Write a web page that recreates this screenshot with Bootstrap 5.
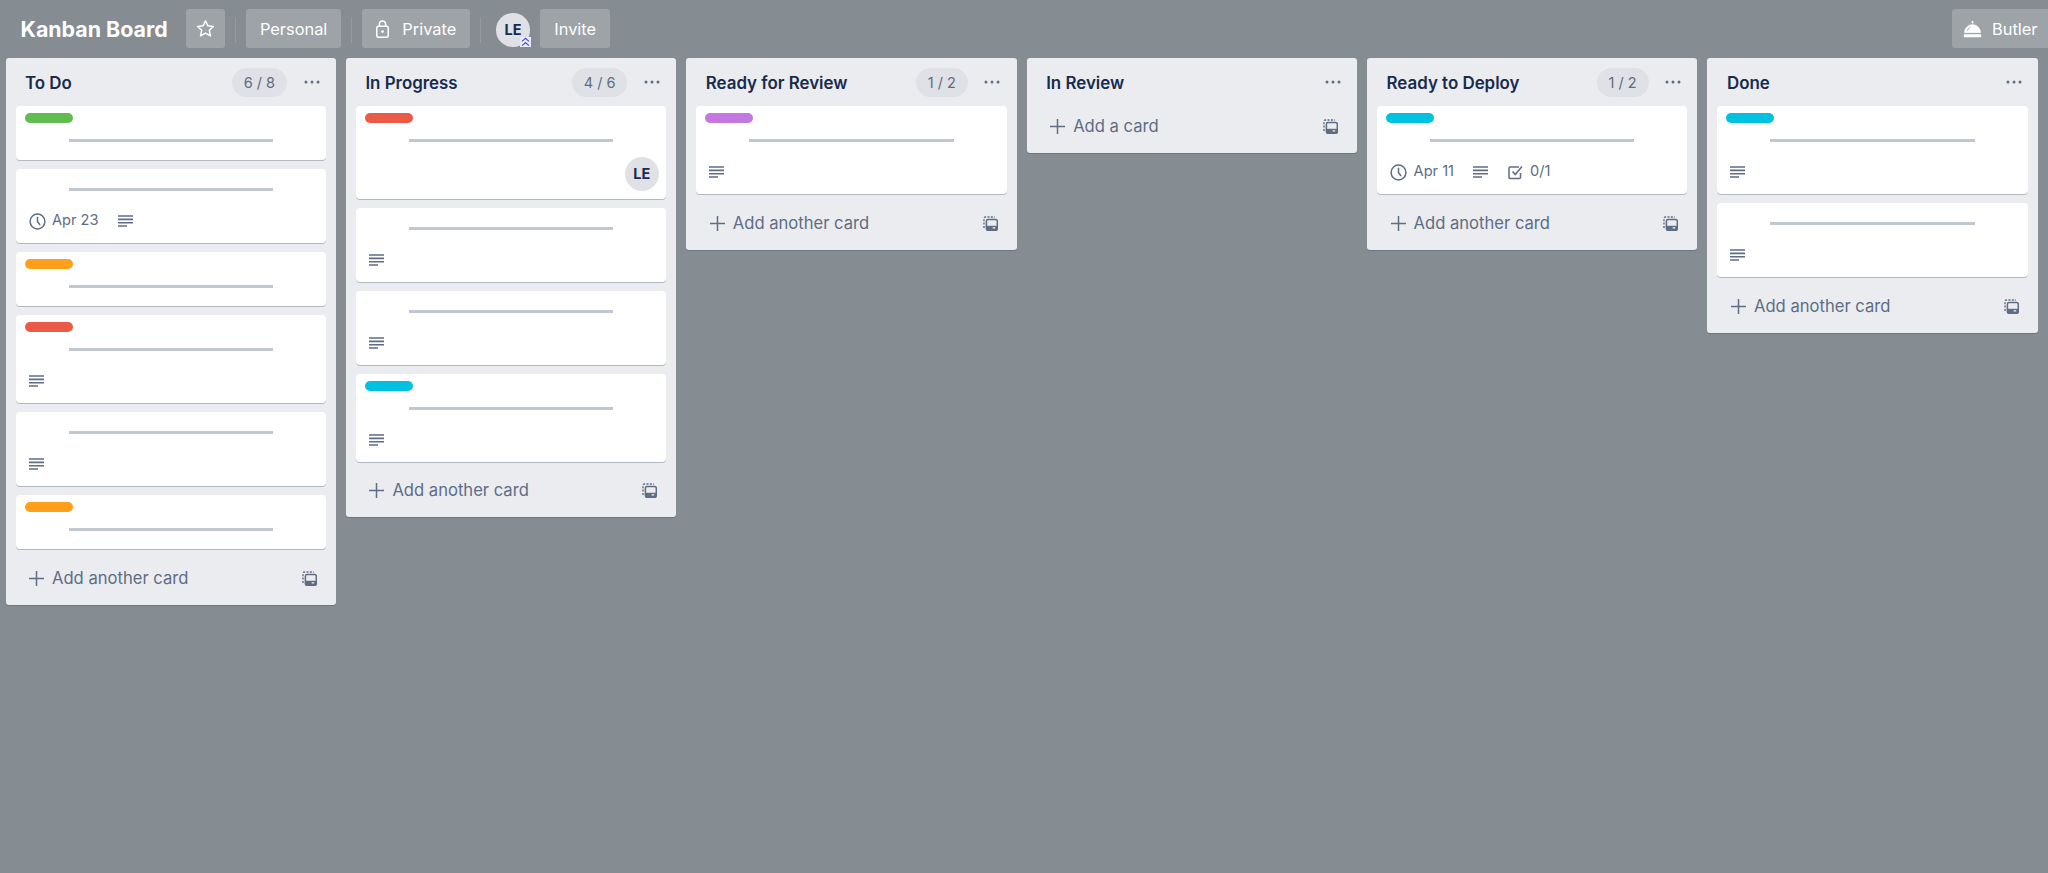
<!DOCTYPE html>
<html lang="en">
<head>
<meta charset="utf-8">
<title>Kanban Board</title>
<link href="https://cdn.jsdelivr.net/npm/bootstrap@5.3.0/dist/css/bootstrap.min.css" rel="stylesheet">
<style>
html,body{height:100%}
body{background:#858c92;font-family:Inter,"Liberation Sans",sans-serif;color:#172b4d;overflow:hidden}
.topbar{height:57.5px;padding:9px 0 0 20.5px;gap:0}
.board-title{font-size:21.4px;font-weight:700;color:#fff;margin:1px 18.5px 0 0;line-height:38.7px}
.bar-btn{height:38.7px;background:#9da3a6;color:#fff;border:0;border-radius:3px;font-size:16.4px;padding:1px 14px 0;display:flex;align-items:center;gap:13px;flex:none}
.bar-btn:hover{background:#a7adb0;color:#fff}
.star-btn{width:38.7px;padding:0;justify-content:center}
.divider{width:1px;height:26px;background:#949a9e;margin:0 10px}
.top-avatar{width:33.5px;height:33.5px;border-radius:50%;background:#dfe1e6;color:#172b4d;font-weight:700;font-size:14.5px;margin:0 10.5px 0 5px;position:relative;flex:none}
.av-badge{position:absolute;right:-1px;bottom:0;width:11px;height:10px;background:#e9ebf5;border-radius:2px 0 0 0;display:flex}
.butler{margin-left:auto;width:96px;padding-left:11px;gap:10px;border-radius:3px 0 0 3px}
.board{padding-left:5.5px;gap:10px;align-items:flex-start}
.lane{width:330.4px;flex:none;background:#ebecf0;border-radius:3px;box-shadow:0 1px 0 rgba(9,30,66,.2)}
.lane-head{height:48.5px;padding:1px 16.3px 0 19.5px}
.lane-title{font-size:16.9px;font-weight:600;margin:0;padding-top:2px;color:#172b4d}
.count{background:#dfe1e6;color:#5e6c84;font-size:14.5px;font-weight:400;height:29px;padding:0 12px;border-radius:15px;margin-right:16.5px;line-height:29px}
.dots{width:16px;height:4px;color:#5e6c84;display:block}
.task{margin:0 10px 9px;width:310.4px;border:0;border-radius:4px;background:#fff;box-shadow:0 1px 0 rgba(9,30,66,.25);padding-top:7px}
.tag{display:block;width:48px;height:10px;border-radius:5px;margin:0 0 4px 9px}
.tag-green{background:#61bd4f}.tag-orange{background:#ff9f1a}.tag-red{background:#eb5a46}.tag-purple{background:#c377e0}.tag-sky{background:#00c2e0}
.rule{height:3px;width:204.4px;margin:12px 0 18px 53px;background:#c1c7d0}
.rule.has-meta{margin-bottom:20px}
.rule.has-avatar{margin-bottom:15px}
.meta{height:20px;margin-bottom:12px;padding-left:13px;color:#5e6c84;font-size:14.6px}
.meta-item{gap:6.5px;margin-right:19px}
.desc-gap{margin-right:20px}
.check-item{gap:7px}
.card-avatar{width:34px;height:34px;border-radius:50%;background:#dfe1e6;color:#172b4d;font-weight:700;font-size:14.5px;margin:0 7.5px 7.6px auto}
.add-row{height:46.7px;padding:0 19px 6.7px 23.5px;color:#5e6c84;font-size:16.6px}
.add-row svg.plus{margin-right:8px}
.ico{flex:none;display:block}
</style>
</head>
<body>
<svg width="0" height="0" class="position-absolute">
 <defs>
  <symbol id="i-clock" viewBox="0 0 17 17"><circle cx="8.5" cy="8.5" r="7.4" fill="none" stroke="currentColor" stroke-width="1.5"/><path d="M8.5 3.8v5l2.6 3.2" fill="none" stroke="currentColor" stroke-width="1.5"/></symbol>
  <symbol id="i-desc" viewBox="0 0 15 12"><path d="M0 1h15M0 4.4h15M0 7.8h15M0 11h9" fill="none" stroke="currentColor" stroke-width="1.6"/></symbol>
  <symbol id="i-check" viewBox="0 0 15 15"><path d="M12.5 8v4.5a1 1 0 0 1-1 1h-9.5a1 1 0 0 1-1-1V3a1 1 0 0 1 1-1h9" fill="none" stroke="currentColor" stroke-width="1.5"/><path d="M4.5 6.5l2.7 3L14 1.6" fill="none" stroke="currentColor" stroke-width="1.5"/></symbol>
  <symbol id="i-plus" viewBox="0 0 15 15"><path d="M7.5 0v15M0 7.5h15" stroke="currentColor" stroke-width="1.5" fill="none"/></symbol>
  <symbol id="i-template" viewBox="0 0 15 15"><path d="M1 12V2.5A1.5 1.5 0 0 1 2.5 1H12" fill="none" stroke="currentColor" stroke-width="1.4" stroke-dasharray="2 1.4"/><rect x="3.4" y="3.6" width="10.9" height="10.7" rx="1.6" fill="none" stroke="currentColor" stroke-width="1.5"/><rect x="3.6" y="9.8" width="10.5" height="4.3" fill="currentColor"/><rect x="9.6" y="11.2" width="2.6" height="1.3" fill="#ebecf0"/></symbol>
  <symbol id="i-dots" viewBox="0 0 16 4"><circle cx="2" cy="2" r="1.5" fill="currentColor"/><circle cx="8" cy="2" r="1.5" fill="currentColor"/><circle cx="14" cy="2" r="1.5" fill="currentColor"/></symbol>
 </defs>
</svg>

<header class="topbar d-flex align-items-start">
  <h1 class="board-title">Kanban Board</h1>
  <button class="btn bar-btn star-btn" aria-label="Star"><svg class="ico" width="19" height="19" viewBox="0 0 20 20"><path d="M10 1.8l2.5 5.4 5.8.7-4.3 4 1.2 5.8L10 14.8l-5.2 2.9L6 11.9l-4.3-4 5.8-.7z" fill="none" stroke="#fff" stroke-width="1.6" stroke-linejoin="round"/></svg></button>
  <span class="divider mt-2"></span>
  <button class="btn bar-btn">Personal</button>
  <span class="divider mt-2"></span>
  <button class="btn bar-btn"><svg class="ico" width="13" height="18" viewBox="0 0 13 18"><rect x=".8" y="6.3" width="11.4" height="10.9" rx="1.5" fill="none" stroke="#fff" stroke-width="1.5"/><path d="M3.4 6.3V4a3.1 3.1 0 0 1 6.2 0v2.3" fill="none" stroke="#fff" stroke-width="1.5"/><circle cx="6.5" cy="11.6" r="1.4" fill="#fff"/></svg>Private</button>
  <span class="divider mt-2"></span>
  <div class="top-avatar d-flex align-items-center justify-content-center mt-1">LE
    <span class="av-badge"><svg width="11" height="10" viewBox="0 0 11 10"><path d="M2 4.4l3.5-3 3.5 3M2 8.6l3.5-3 3.5 3" fill="none" stroke="#4a4fd0" stroke-width="1.2"/></svg></span>
  </div>
  <button class="btn bar-btn">Invite</button>
  <button class="btn bar-btn butler"><svg class="ico" width="19" height="18" viewBox="0 0 19 18"><path d="M9.5 1v2.5" stroke="#fff" stroke-width="1.6"/><path d="M1.6 12.6a7.9 7.9 0 0 1 15.8 0z" fill="#fff" stroke="#fff" stroke-width=".8"/><rect x=".8" y="14.2" width="17.4" height="3" rx=".8" fill="#fff"/><path d="M4.4 10.8c.4-1.8 1.5-3 3-3.7" stroke="#9da3a6" stroke-width="1" fill="none"/></svg>Butler</button>
</header>

<main class="board d-flex">

  <section class="lane">
    <div class="lane-head d-flex align-items-center"><h2 class="lane-title me-auto">To Do</h2><span class="count">6 / 8</span><svg class="dots"><use href="#i-dots"/></svg></div>
    <div class="card task"><span class="tag tag-green"></span><div class="rule"></div></div>
    <div class="card task"><div class="rule has-meta"></div><div class="meta d-flex align-items-center"><span class="meta-item d-flex align-items-center"><svg class="ico" width="17" height="17"><use href="#i-clock"/></svg>Apr 23</span><svg class="ico" width="15" height="12"><use href="#i-desc"/></svg></div></div>
    <div class="card task"><span class="tag tag-orange"></span><div class="rule"></div></div>
    <div class="card task"><span class="tag tag-red"></span><div class="rule has-meta"></div><div class="meta d-flex align-items-center"><svg class="ico" width="15" height="12"><use href="#i-desc"/></svg></div></div>
    <div class="card task"><div class="rule has-meta"></div><div class="meta d-flex align-items-center"><svg class="ico" width="15" height="12"><use href="#i-desc"/></svg></div></div>
    <div class="card task"><span class="tag tag-orange"></span><div class="rule"></div></div>
    <div class="add-row d-flex align-items-center"><svg class="ico plus" width="15" height="15"><use href="#i-plus"/></svg><span class="me-auto">Add another card</span><svg class="ico" width="15" height="15"><use href="#i-template"/></svg></div>
  </section>

  <section class="lane">
    <div class="lane-head d-flex align-items-center"><h2 class="lane-title me-auto">In Progress</h2><span class="count">4 / 6</span><svg class="dots"><use href="#i-dots"/></svg></div>
    <div class="card task"><span class="tag tag-red"></span><div class="rule has-avatar"></div><div class="card-avatar d-flex align-items-center justify-content-center">LE</div></div>
    <div class="card task"><div class="rule has-meta"></div><div class="meta d-flex align-items-center"><svg class="ico" width="15" height="12"><use href="#i-desc"/></svg></div></div>
    <div class="card task"><div class="rule has-meta"></div><div class="meta d-flex align-items-center"><svg class="ico" width="15" height="12"><use href="#i-desc"/></svg></div></div>
    <div class="card task"><span class="tag tag-sky"></span><div class="rule has-meta"></div><div class="meta d-flex align-items-center"><svg class="ico" width="15" height="12"><use href="#i-desc"/></svg></div></div>
    <div class="add-row d-flex align-items-center"><svg class="ico plus" width="15" height="15"><use href="#i-plus"/></svg><span class="me-auto">Add another card</span><svg class="ico" width="15" height="15"><use href="#i-template"/></svg></div>
  </section>

  <section class="lane">
    <div class="lane-head d-flex align-items-center"><h2 class="lane-title me-auto">Ready for Review</h2><span class="count">1 / 2</span><svg class="dots"><use href="#i-dots"/></svg></div>
    <div class="card task"><span class="tag tag-purple"></span><div class="rule has-meta"></div><div class="meta d-flex align-items-center"><svg class="ico" width="15" height="12"><use href="#i-desc"/></svg></div></div>
    <div class="add-row d-flex align-items-center"><svg class="ico plus" width="15" height="15"><use href="#i-plus"/></svg><span class="me-auto">Add another card</span><svg class="ico" width="15" height="15"><use href="#i-template"/></svg></div>
  </section>

  <section class="lane">
    <div class="lane-head d-flex align-items-center"><h2 class="lane-title me-auto">In Review</h2><svg class="dots"><use href="#i-dots"/></svg></div>
    <div class="add-row d-flex align-items-center"><svg class="ico plus" width="15" height="15"><use href="#i-plus"/></svg><span class="me-auto">Add a card</span><svg class="ico" width="15" height="15"><use href="#i-template"/></svg></div>
  </section>

  <section class="lane">
    <div class="lane-head d-flex align-items-center"><h2 class="lane-title me-auto">Ready to Deploy</h2><span class="count">1 / 2</span><svg class="dots"><use href="#i-dots"/></svg></div>
    <div class="card task"><span class="tag tag-sky"></span><div class="rule has-meta"></div><div class="meta d-flex align-items-center"><span class="meta-item d-flex align-items-center"><svg class="ico" width="17" height="17"><use href="#i-clock"/></svg>Apr 11</span><svg class="ico desc-gap" width="15" height="12"><use href="#i-desc"/></svg><span class="check-item d-flex align-items-center"><svg class="ico" width="15" height="15"><use href="#i-check"/></svg>0/1</span></div></div>
    <div class="add-row d-flex align-items-center"><svg class="ico plus" width="15" height="15"><use href="#i-plus"/></svg><span class="me-auto">Add another card</span><svg class="ico" width="15" height="15"><use href="#i-template"/></svg></div>
  </section>

  <section class="lane">
    <div class="lane-head d-flex align-items-center"><h2 class="lane-title me-auto">Done</h2><svg class="dots"><use href="#i-dots"/></svg></div>
    <div class="card task"><span class="tag tag-sky"></span><div class="rule has-meta"></div><div class="meta d-flex align-items-center"><svg class="ico" width="15" height="12"><use href="#i-desc"/></svg></div></div>
    <div class="card task"><div class="rule has-meta"></div><div class="meta d-flex align-items-center"><svg class="ico" width="15" height="12"><use href="#i-desc"/></svg></div></div>
    <div class="add-row d-flex align-items-center"><svg class="ico plus" width="15" height="15"><use href="#i-plus"/></svg><span class="me-auto">Add another card</span><svg class="ico" width="15" height="15"><use href="#i-template"/></svg></div>
  </section>

</main>
<script src="https://cdn.jsdelivr.net/npm/bootstrap@5.3.0/dist/js/bootstrap.bundle.min.js"></script>
</body>
</html>
